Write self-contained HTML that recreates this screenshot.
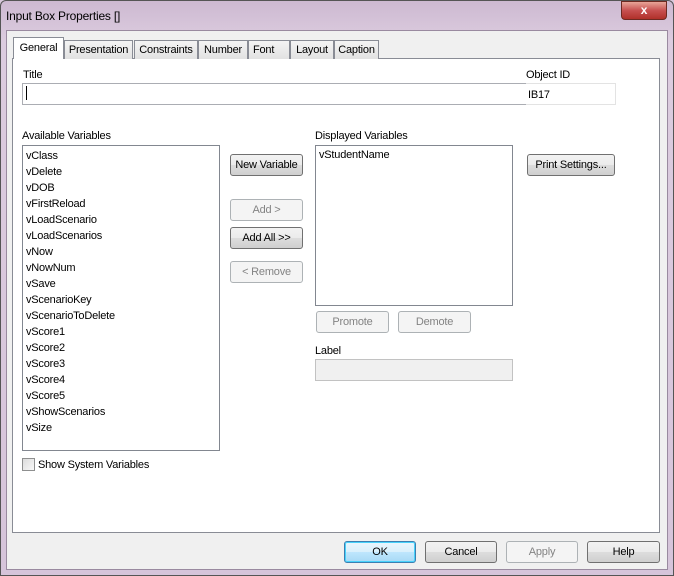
<!DOCTYPE html>
<html><head><meta charset="utf-8"><style>
*{box-sizing:border-box;margin:0;padding:0}
body{width:674px;height:576px;overflow:hidden;background:#d8c8dc;font-family:"Liberation Sans",sans-serif;font-size:11px;letter-spacing:-0.2px;color:#000;position:relative}
.a{position:absolute}
.frame{left:0;top:0;width:674px;height:576px;background:linear-gradient(#cdb9d1,#dcccdf 40px,#d6c4da);border:1px solid #555;border-radius:6px 6px 0 0}
.client{left:6px;top:30px;width:662px;height:540px;background:#f0f0f0;border:1px solid #9a8aa0}
.page{left:12px;top:58px;width:648px;height:475px;background:#fff;border:1px solid #898c95}
.tab{top:40px;height:19px;background:linear-gradient(#f4f4f4,#e2e2e2);border:1px solid #898c95;border-bottom:none;text-align:center;line-height:19px}
.tab.sel{top:37px;height:22px;background:#fff;z-index:2;line-height:20px}
.box{background:#fff;border:1px solid #abadb3}
.lst{background:#fff;border:1px solid #828790}
.btn{height:22px;border:1px solid #707070;border-radius:3px;background:linear-gradient(#f2f2f2 0,#ebebeb 50%,#dddddd 51%,#cfcfcf);text-align:center;line-height:21px}
.dis{border-color:#adb2b5;background:#f4f4f4;color:#838383}
.item{left:26px;line-height:16px}
</style></head><body>
<div class="a frame"></div>
<div class="a" style="left:6px;top:9px;font-size:12px">Input Box Properties []</div>
<div class="a" style="left:621px;top:1px;width:46px;height:19px;border:1px solid #6d2a22;border-radius:0 0 4px 4px;background:linear-gradient(#e8a598,#c75050 50%,#b0302a);color:#fff;font-weight:bold;text-align:center;line-height:17px;font-size:12px">x</div>
<div class="a client"></div>
<div class="a page"></div>
<div class="a tab sel" style="left:13px;width:51px">General</div>
<div class="a tab" style="left:64px;width:69px">Presentation</div>
<div class="a tab" style="left:134px;width:64px">Constraints</div>
<div class="a tab" style="left:198px;width:50px">Number</div>
<div class="a tab" style="left:248px;width:42px;text-align:left;padding-left:4px">Font</div>
<div class="a tab" style="left:290px;width:44px">Layout</div>
<div class="a tab" style="left:334px;width:45px">Caption</div>

<div class="a" style="left:23px;top:69px">Title</div>
<div class="a box" style="left:22px;top:83px;width:505px;height:22px"></div>
<div class="a" style="left:26px;top:86px;width:1px;height:14px;background:#000"></div>
<div class="a" style="left:526px;top:69px">Object ID</div>
<div class="a" style="left:526px;top:83px;width:90px;height:22px;border:1px solid #e3e3e3;border-left:none;background:#fff;padding:5px 2px">IB17</div>

<div class="a" style="left:22px;top:130px">Available Variables</div>
<div class="a lst" style="left:22px;top:145px;width:198px;height:306px"></div>
<div class="a item" style="top:148px">vClass</div>
<div class="a item" style="top:164px">vDelete</div>
<div class="a item" style="top:180px">vDOB</div>
<div class="a item" style="top:196px">vFirstReload</div>
<div class="a item" style="top:212px">vLoadScenario</div>
<div class="a item" style="top:228px">vLoadScenarios</div>
<div class="a item" style="top:244px">vNow</div>
<div class="a item" style="top:260px">vNowNum</div>
<div class="a item" style="top:276px">vSave</div>
<div class="a item" style="top:292px">vScenarioKey</div>
<div class="a item" style="top:308px">vScenarioToDelete</div>
<div class="a item" style="top:324px">vScore1</div>
<div class="a item" style="top:340px">vScore2</div>
<div class="a item" style="top:356px">vScore3</div>
<div class="a item" style="top:372px">vScore4</div>
<div class="a item" style="top:388px">vScore5</div>
<div class="a item" style="top:404px">vShowScenarios</div>
<div class="a item" style="top:420px">vSize</div>

<div class="a" style="left:22px;top:458px;width:13px;height:13px;border:1px solid #8e8f8f;background:linear-gradient(135deg,#dcdcdc,#f8f8f8)"></div>
<div class="a" style="left:38px;top:459px">Show System Variables</div>

<div class="a btn" style="left:230px;top:154px;width:73px">New Variable</div>
<div class="a btn dis" style="left:230px;top:199px;width:73px">Add &gt;</div>
<div class="a btn" style="left:230px;top:227px;width:73px">Add All &gt;&gt;</div>
<div class="a btn dis" style="left:230px;top:261px;width:73px">&lt; Remove</div>

<div class="a" style="left:315px;top:130px">Displayed Variables</div>
<div class="a lst" style="left:315px;top:145px;width:198px;height:161px"></div>
<div class="a" style="left:319px;top:149px">vStudentName</div>
<div class="a btn" style="left:527px;top:154px;width:88px">Print Settings...</div>
<div class="a btn dis" style="left:316px;top:311px;width:73px">Promote</div>
<div class="a btn dis" style="left:398px;top:311px;width:73px">Demote</div>
<div class="a" style="left:315px;top:345px">Label</div>
<div class="a" style="left:315px;top:359px;width:198px;height:22px;border:1px solid #c2c2c2;background:#f0f0f0"></div>

<div class="a btn" style="left:344px;top:541px;width:72px;border-color:#3c7fb1;background:linear-gradient(#eaf6fd,#d9f0fc 50%,#bee6fd 51%,#a7d9f5);box-shadow:inset 0 0 0 1px #48d2fb">OK</div>
<div class="a btn" style="left:425px;top:541px;width:72px">Cancel</div>
<div class="a btn dis" style="left:506px;top:541px;width:72px">Apply</div>
<div class="a btn" style="left:587px;top:541px;width:73px">Help</div>
</body></html>
